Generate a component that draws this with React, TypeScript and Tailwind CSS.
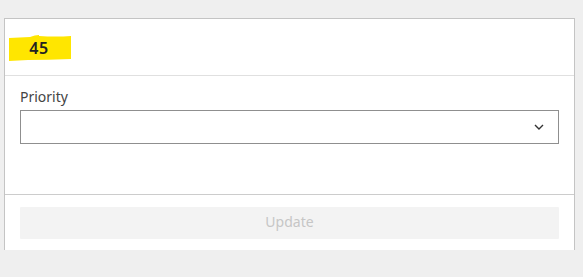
import React from "react";

export default function App() {
  return (
    <div className="min-h-[277px] w-[583px] bg-[#efefef] pt-[18px] pl-[4px]" style={{ fontFamily: '"Noto Sans", "Open Sans", sans-serif' }}>
      <div className="w-[571px] h-[232px] bg-white border-x border-t border-[#c4c4c4] flex flex-col">
        <div className="h-[57px] border-b border-[#e0e0e0] flex items-center pl-[3px]">
          <div className="relative w-[64px] h-[27px] flex items-center justify-center">
            <svg className="absolute inset-0" width="64" height="27" viewBox="0 0 64 27">
              <path d="M1 4 L22 3 Q27 1 31 1 L31 2 Q48 3 63 2 L63 25 Q40 26 20 26 L1 27 Z" fill="#ffe600" />
            </svg>
            <span className="relative text-[16px] font-semibold text-[#222] tracking-[0.5px] mt-[1px] -ml-[2px]">45</span>
          </div>
        </div>
        <div className="flex-1 px-[15px] pt-[11px]">
          <div className="text-[14px] leading-[20px] text-[#444] mb-[3px]">Priority</div>
          <div className="h-[34px] border border-[#8f8f8f] flex items-center justify-end pr-[14px]">
            <svg width="10" height="6" viewBox="0 0 10 6">
              <path d="M1 1 L5 5 L9 1" fill="none" stroke="#333" strokeWidth="1.4" />
            </svg>
          </div>
        </div>
        <div className="h-[56px] border-t border-[#cccccc] px-[15px] pt-[12px]">
          <div className="h-[32px] bg-[#f3f3f3] rounded-[1px] flex items-center justify-center text-[14px] leading-[20px] text-[#c6c6c6] pb-[2px]">
            Update
          </div>
        </div>
      </div>
    </div>
  );
}
